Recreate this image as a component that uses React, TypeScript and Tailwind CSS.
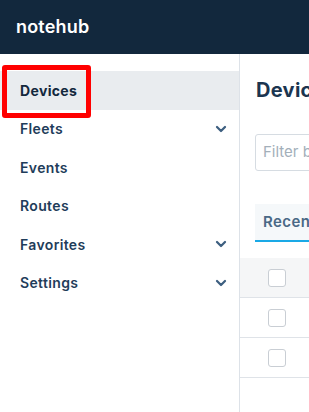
import { ChevronDown } from "lucide-react";

const navItems = [
  { label: "Devices", active: true },
  { label: "Fleets", expand: true },
  { label: "Events" },
  { label: "Routes" },
  { label: "Favorites", expand: true },
  { label: "Settings", expand: true },
];

function Checkbox() {
  return <div className="w-[18px] h-[18px] rounded-[3px] border border-[#c9ced4] bg-white" />;
}

export default function App() {
  return (
    <div
      className="h-screen w-full flex flex-col overflow-hidden bg-white"
      style={{ fontFamily: "Inter, 'Noto Sans', sans-serif" }}
    >
      {/* TOP BAR */}
      <header className="h-[54px] shrink-0 bg-[#12283d] flex items-center px-4">
        <span className="text-white text-[18px] font-semibold tracking-[0.2px] -mt-[2px]">notehub</span>
      </header>

      <div className="flex flex-1 min-h-0">
        {/* SIDEBAR */}
        <aside className="relative w-[240px] shrink-0 border-r border-[#dde2e8] pt-[17px]">
          {navItems.map((item) => (
            <div
              key={item.label}
              className={`h-[38.5px] flex items-center justify-between pl-5 pr-[10px] ${
                item.active ? "bg-[#e9ecef]" : ""
              }`}
            >
              <span
                className={`text-[14px] tracking-[0.35px] ${
                  item.active ? "font-bold text-[#13283d]" : "font-semibold text-[#1f3d5a]"
                }`}
              >
                {item.label}
              </span>
              {item.expand && <ChevronDown size={16} strokeWidth={3.4} className="text-[#3d5f80]" />}
            </div>
          ))}
          {/* highlight annotation */}
          <div className="absolute left-[2px] top-[11px] w-[89px] h-[53px] border-[5px] border-[#ff0000] rounded-[3px]" />
        </aside>

        {/* MAIN */}
        <main className="flex-1 min-w-0 overflow-hidden">
          <div className="w-[700px]">
            <div className="px-[15px] pt-[22px]">
              <h1 className="pl-px text-[20px] leading-7 font-bold text-[#1b3550] tracking-[0.3px]">Devices</h1>
              <div className="mt-[30px] h-[37px] w-[400px] border border-[#d6dce2] rounded-[3px] flex items-center px-[7px]">
                <span className="text-[15px] text-[#a3afba]">Filter by device name or serial number</span>
              </div>
              <div className="mt-[33px] flex">
                <div className="h-[38px] bg-[#f5f8fa] border-b-2 border-[#1aa9e6] flex items-center px-2">
                  <span className="text-[15px] font-semibold text-[#4a6986] tracking-[0.4px]">Recently Active</span>
                </div>
              </div>
            </div>

            {/* TABLE */}
            <div className="mt-4">
              <div className="h-[40px] bg-[#f5f6f7] border-b border-[#dfe3e8] flex items-center pl-[28px]">
                <Checkbox />
              </div>
              {[0, 1].map((i) => (
                <div key={i} className="h-[40px] border-b border-[#dfe3e8] flex items-center pl-[28px]">
                  <Checkbox />
                </div>
              ))}
            </div>
          </div>
        </main>
      </div>
    </div>
  );
}
